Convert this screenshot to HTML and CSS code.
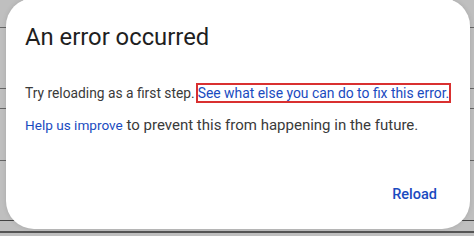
FILE: index.html
```html
<!DOCTYPE html>
<html>
<head>
<meta charset="utf-8">
<link rel="stylesheet" href="styles.css">
</head>
<body>
<div class="backdrop">
  <div class="dialog">
    <h1 class="title">An error occurred</h1>
    <p class="line first">Try reloading as a first step.<a class="link boxed" href="#">See what else you can do to fix this error.</a></p>
    <p class="line second"><a class="link" href="#">Help us improve</a> to prevent this from happening in the future.</p>
    <div class="actions"><a class="btn" href="#">Reload</a></div>
  </div>
</div>
</body>
</html>
```
FILE: styles.css
```css
html, body {
  margin: 0;
  padding: 0;
}
body {
  width: 474px;
  height: 236px;
  overflow: hidden;
  background: #bfbfbf;
  font-family: Roboto, "Liberation Sans", sans-serif;
}
.backdrop {
  height: 236px;
  background-image:
    linear-gradient(#666, #666),
    linear-gradient(#666, #666),
    linear-gradient(#666, #666),
    linear-gradient(#666, #666),
    linear-gradient(#444, #444),
    linear-gradient(#555, #555);
  background-repeat: no-repeat;
  background-size: 474px 1px, 474px 1px, 474px 1px, 474px 1px, 474px 1px, 474px 2px;
  background-position: 0 29px, 0 90px, 0 110px, 0 162px, 0 222px, 0 233px;
  padding: 0 4px 0 6px;
}
.dialog {
  margin-top: -2px;
  height: 231px;
  background: #fff;
  border-radius: 28px;
  box-shadow: 0 0 5px rgba(0,0,0,0.12);
  padding: 0 0 0 19px;
  display: flex;
  flex-direction: column;
  box-sizing: border-box;
}
.title {
  margin: 24px 0 0 0;
  font-size: 23.8px;
  font-weight: 400;
  color: #1f1f1f;
  line-height: 30px;
}
.line {
  margin: 0;
  color: #3a3a3a;
  line-height: 20px;
}
.first {
  font-size: 13.8px;
  margin-top: 31px;
}
.second {
  font-size: 15px;
  margin-top: 12px;
}
.second .link {
  font-size: 13.6px;
}
.first .link {
  font-size: 13.9px;
}
.link {
  color: #1a4bbf;
  text-decoration: none;
}
.boxed {
  border: 2px solid #d93030;
  padding: 0;
  margin-left: 1px;
}
.actions {
  margin-top: auto;
  margin-bottom: 26px;
  display: flex;
  justify-content: flex-end;
  padding-right: 33px;
}
.btn {
  color: #1a4bbf;
  text-decoration: none;
  font-size: 14.5px;
  font-weight: 500;
}
```
